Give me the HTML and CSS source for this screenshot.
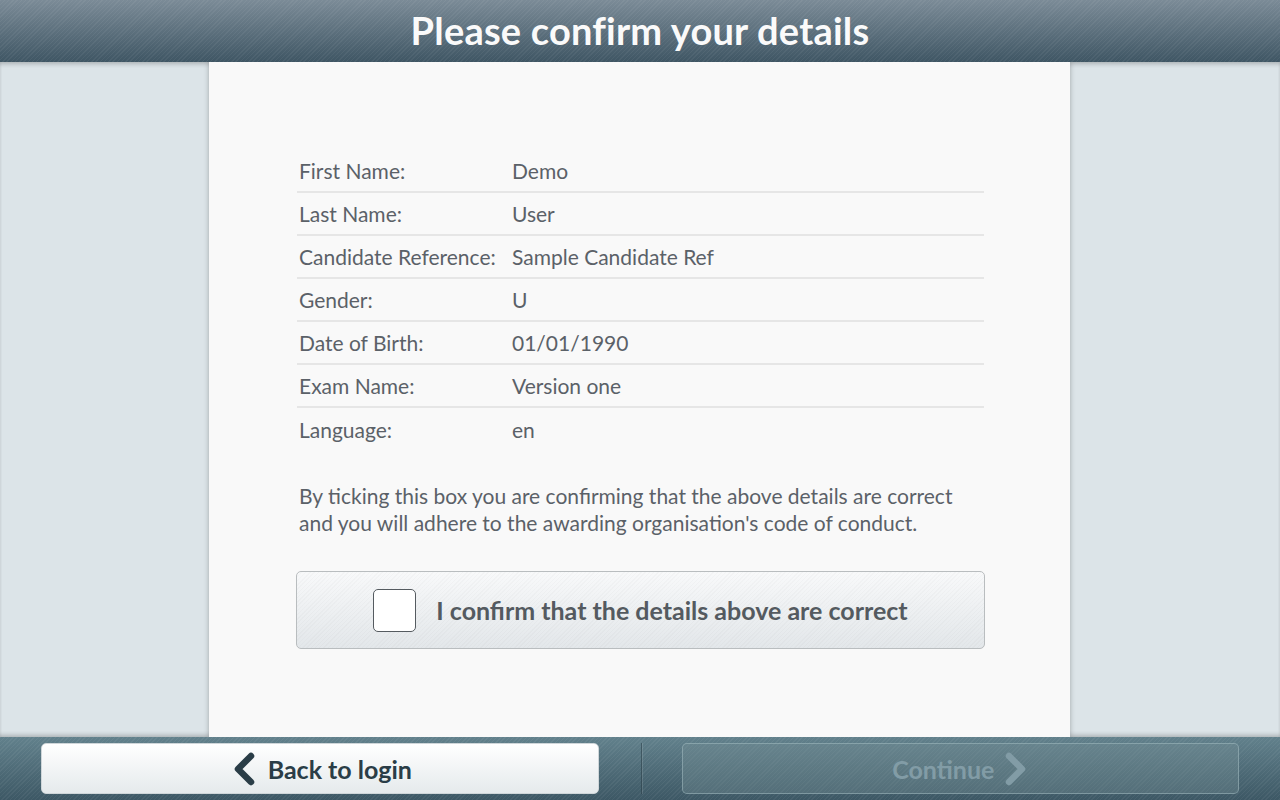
FILE: index.html
```html
<!DOCTYPE html>
<html lang="en">
<head>
<meta charset="utf-8">
<title>Please confirm your details</title>
<link rel="stylesheet" href="styles.css">
</head>
<body>
<div class="app">
  <header class="topbar">
    <h1 class="title">Please confirm your details</h1>
  </header>
  <main class="stage">
    <section class="panel">
      <table class="details">
        <tr><td class="lbl">First Name:</td><td>Demo</td></tr>
        <tr><td class="lbl">Last Name:</td><td>User</td></tr>
        <tr><td class="lbl">Candidate Reference:</td><td>Sample Candidate Ref</td></tr>
        <tr><td class="lbl">Gender:</td><td>U</td></tr>
        <tr><td class="lbl">Date of Birth:</td><td>01/01/1990</td></tr>
        <tr><td class="lbl">Exam Name:</td><td>Version one</td></tr>
        <tr><td class="lbl">Language:</td><td>en</td></tr>
      </table>
      <p class="notice">By ticking this box you are confirming that the above details are correct and you will adhere to the awarding organisation's code of conduct.</p>
      <label class="confirm">
        <span class="box"></span>
        <span class="confirm-text">I confirm that the details above are correct</span>
      </label>
    </section>
  </main>
  <footer class="bottombar">
    <button class="btn btn-back">
      <svg class="chev" width="24" height="34" viewBox="0 0 24 34"><path d="M19 4 L6 17 L19 30" fill="none" stroke="currentColor" stroke-width="6.5" stroke-linecap="round" stroke-linejoin="round"/></svg>
      <span>Back to login</span>
    </button>
    <div class="divider"></div>
    <button class="btn btn-next" disabled>
      <span>Continue</span>
      <svg class="chev" width="24" height="34" viewBox="0 0 24 34"><path d="M5 4 L18 17 L5 30" fill="none" stroke="currentColor" stroke-width="6.5" stroke-linecap="round" stroke-linejoin="round"/></svg>
    </button>
  </footer>
</div>
</body>
</html>
```
FILE: styles.css
```css
* { box-sizing: border-box; }
html, body { margin: 0; padding: 0; }
body {
  font-family: "Source Sans Pro", Lato, "Noto Sans", sans-serif;
  color: #5b6168;
}
.app {
  width: 1280px;
  height: 800px;
  display: flex;
  flex-direction: column;
  background-color: #dce4e8;
  overflow: hidden;
}
.topbar {
  height: 62px;
  flex: none;
  display: flex;
  align-items: center;
  justify-content: center;
  padding-bottom: 3px;
  background:
    repeating-linear-gradient(135deg, rgba(255,255,255,0.05) 0 1px, rgba(0,0,0,0) 1px 3px),
    linear-gradient(#7b8b97, #3f5664);
  position: relative;
  z-index: 2;
}
.title {
  margin: 0;
  color: #fafafa;
  font-size: 38px;
  font-weight: 700;
  letter-spacing: 0.2px;
}
.stage {
  flex: 1;
  display: flex;
  justify-content: center;
  box-shadow: inset 0 4px 4px -2px rgba(0,0,0,0.22), inset 0 -4px 4px -2px rgba(0,0,0,0.22);
}
.panel {
  width: 861px;
  margin-right: 1px;
  background: #f9f9f9;
  box-shadow: 0 0 5px rgba(0,0,0,0.28);
  padding: 87px 86px 0 88px;
}
.details {
  width: 687px;
  border-collapse: collapse;
  font-size: 21px;
}
.details td {
  height: 43px;
  padding: 0 0 0 2px;
  vertical-align: middle;
  border-bottom: 2px solid #e6e6e6;
}
.details tr:last-child td { border-bottom: none; }
.details td.lbl { width: 213px; }
.notice {
  margin: 32px 0 0 2px;
  font-size: 21px;
  line-height: 27px;
  width: 680px;
}
.confirm {
  margin: 35px 0 0 -1px;
  height: 78px;
  width: 689px;
  display: flex;
  align-items: center;
  justify-content: center;
  gap: 20px;
  border: 1px solid #b9bdbf;
  border-radius: 5px;
  background:
    repeating-linear-gradient(135deg, rgba(0,0,0,0.018) 0 1px, rgba(0,0,0,0) 1px 3px),
    linear-gradient(#f8f9fa, #e3e7ea);
}
.box {
  width: 43px;
  height: 43px;
  border: 1px solid #555b60;
  border-radius: 5px;
  background: #fff;
  flex: none;
}
.confirm-text {
  font-size: 25px;
  font-weight: 700;
  color: #545a60;
}
.bottombar {
  height: 63px;
  flex: none;
  display: flex;
  align-items: center;
  padding: 0 41px;
  background:
    repeating-linear-gradient(135deg, rgba(255,255,255,0.05) 0 1px, rgba(0,0,0,0) 1px 3px),
    linear-gradient(#62818c, #3d5865);
}
.btn {
  font-family: inherit;
  width: 558px;
  height: 51px;
  border-radius: 5px;
  display: flex;
  align-items: center;
  justify-content: center;
  gap: 10px;
  font-size: 25px;
  font-weight: 700;
  padding: 0;
}
.btn-back {
  border: 1px solid #cfd6d9;
  color: #2a3d47;
  background: linear-gradient(#ffffff, #e5eaec);
  gap: 12px;
  padding-left: 4px;
}
.divider {
  width: 1px;
  height: 51px;
  margin: 0 40px 0 42px;
  background: rgba(40,60,70,0.55);
  box-shadow: 1px 0 0 rgba(255,255,255,0.12);
}
.btn-next {
  border: 1px solid rgba(160,185,192,0.55);
  color: #829ca6;
  background: rgba(120,145,152,0.35);
}
.chev { flex: none; }
```
